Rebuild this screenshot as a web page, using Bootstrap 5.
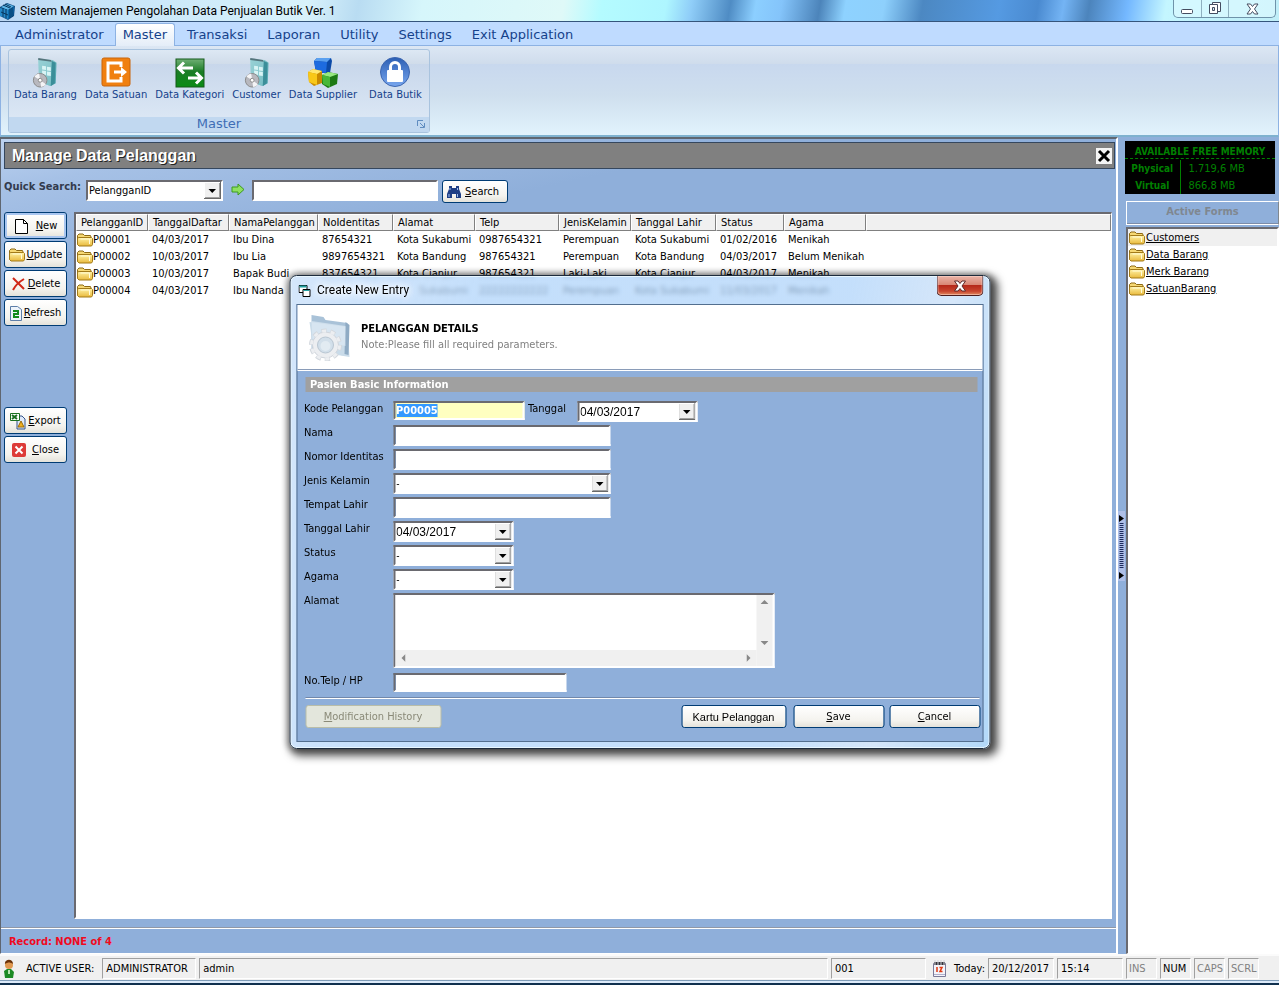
<!DOCTYPE html>
<html lang="id">
<head>
<meta charset="utf-8">
<meta name="viewport" content="width=device-width, initial-scale=1">
<title>Sistem Manajemen Pengolahan Data Penjualan Butik Ver. 1</title>
<link href="https://cdn.jsdelivr.net/npm/bootstrap@5.3.0/dist/css/bootstrap.min.css" rel="stylesheet">
<style>
:root{--pane:#8fafda;--face:#f0f0f0;--ink:#15428b;--ui:"DejaVu Sans Condensed","DejaVu Sans",sans-serif;--wide:"DejaVu Sans",sans-serif;--caption:Roboto,"Noto Sans",sans-serif;--plain:"Liberation Sans",Arial,sans-serif}
body{font:11px/14px var(--ui);color:#000;background:var(--pane)}
svg{display:block;flex:none}
u{text-decoration:underline}
/* window caption */
.win-title{height:22px;border-bottom:1px solid #35557c;font:12px/22px var(--caption);
background:linear-gradient(100deg,#b9d5f3 0,#c4e2f8 5%,#d8f2fb 24%,#b9dcf2 28%,#d6f6fb 33%,#dff9f8 44%,#b4fbff 47%,#aef6ff 52%,#8fcdf8 54%,#4f8cc4 57%,#8ccfff 59%,#84c4fa 61%,#4c84ba 64%,#8ed2ff 66%,#8ed0fc 69%,#4c88c2 72%,#559ae2 78%,#4a8ad0 81%,#74b4f4 83%,#4c84bc 85%,#74b8ff 88%,#c4f6ff 91%,#c0eef8 100%)}
.win-ctl{height:18px;border:1px solid #6f93aa;border-top:0;border-radius:0 0 5px 5px;margin-right:3px;background:rgba(220,250,255,.7)}
.win-ctl button{border:0;background:none;padding:0;width:27px;display:flex;align-items:center;justify-content:center}
.win-ctl button+button{border-left:1px solid #8fb0c0}
.win-ctl button:last-child{width:47px}
/* ribbon */
.rib-tabs{height:23px;background:#bfdbff;padding-left:5px;font:13px/25px var(--wide);position:relative}
.rib-tabs a{color:var(--ink);text-decoration:none;padding:0 10px;height:24px}
.rib-tabs a.on{margin:1px 2px 0 1px;padding:0 7px;background:linear-gradient(#fff,#e4edf8);border:1px solid #8db2e3;border-bottom:0;border-radius:3px 3px 0 0;line-height:22px;height:23px;z-index:1}
.rib-body{height:92px;border:1px solid #8db2e3;border-bottom:2px solid #7fb2cf;background:linear-gradient(#dce7f4 0,#cfdcec 18px,#c8d8ee 18px,#cfdfee 50px,#e2f3fd 90px);padding:3px 7px}
.rib-group{height:84px;border:1px solid #a9c3de;border-radius:3px;background:linear-gradient(#dde8f4 0,#d0dcea 14px,#c8d7eb 14px,#dae6f4 66px);color:var(--ink);font:10px/12px var(--wide)}
.rib-items{gap:8px;padding:7px 7px 0 5px}
.rib-item{border:0;background:none;padding:0;color:inherit;display:flex;flex-direction:column;align-items:center;gap:1px}
.rib-cap{height:15px;background:#c1d8f0;color:#3e6db5;font-size:13px;line-height:14px;position:relative}
/* panes */
.pane-main{background:linear-gradient(168deg,#bcd2f0 0,#a6c1e6 50px,var(--pane) 160px);border:1px solid #5f6670;border-top:2px solid #5f6670;border-right:2px solid #fff;border-bottom:1px solid #fff;min-width:0}
.form-head{height:27px;margin:3px 1px 0 3px;background:#808080;border:1px solid #35475e;color:#fff;font:bold 16px/25px var(--plain);text-shadow:1px 1px 0 #222;padding:0 2px 0 7px}
.x-box{width:16px;height:16px;background:#f4f4f4;border:0;padding:0}
.bev{border:2px solid;border-color:#6a6a70 #fff #fff #6a6a70;background-color:#fff}
.fld.form-control,.fld.form-select{font:11px/15px var(--ui);color:#000;border:2px solid;border-color:#6a6a70 #fff #fff #6a6a70;border-radius:0;padding:0 1px;height:21px;min-height:0;background-color:#fff;box-shadow:none;flex:none}
.fld.form-select{appearance:none;padding-right:18px;background-repeat:no-repeat;background-position:right 0 center;background-size:17px 17px;background-image:url("data:image/svg+xml,%3Csvg xmlns='http://www.w3.org/2000/svg' viewBox='0 0 17 17'%3E%3Cpath fill='%23696969' d='M0 0h17v17H0z'/%3E%3Cpath fill='%23fff' d='M0 0h16v16H0z'/%3E%3Cpath fill='%23a0a0a0' d='M1 1h15v15H1z'/%3E%3Cpath fill='%23f0f0f0' d='M1 1h14v14H1z'/%3E%3Cpath d='M4.500 7h7.500L8.250 11z'/%3E%3C/svg%3E")}
.fld.form-select.plain-txt{font:12px/16px var(--plain)}
.fld.form-control.key{background:#ffffc0;font-weight:bold;height:19px}
.key::selection{background:#3399ff;color:#fff}
.w-date{width:120px}.w-key{width:131px}.w-long{width:217px}.w-tel{width:173px}.w-pick{width:137px}.w-find{width:186px}
.push{font:11px/14px var(--ui);color:#000;border:1px solid #003c74;border-radius:3px;background:linear-gradient(#fff,#f4f3ee 70%,#e4e2da);padding:1px 0 0;height:23px;display:flex;align-items:center;justify-content:center;flex:none}
.push:disabled{color:#8a8a78;border-color:#b9bda8;background:#e3e6dc;opacity:1}
.find-row{padding:7px 0 0 3px;margin-top:4px}
.find-row .arrow{margin:3px 7px 0 8px}
.q-lab{width:78px;color:#333b4d}
.work{padding:0 4px 0 3px;margin-top:9px}
.side-bar{width:63px;gap:2px;margin-right:7px}
.side-bar .push{height:27px;gap:2px}
.side-bar .push:first-child{box-shadow:inset 0 0 0 2px #a9c6f0}
.side-bar .push.after{margin-top:79px}
/* record grid */
.grid-box{min-width:0;overflow:hidden;border-right-width:1px}
.rec-grid{width:100%;table-layout:fixed;border-collapse:separate;border-spacing:0;white-space:nowrap}
.rec-grid th{font-weight:normal;background:var(--face);height:17px;padding:0 0 0 4px;border:1px solid;border-color:#fff #808080 #808080 #fff}
.rec-grid td{height:17px;padding:1px 0 0 4px}
.rec-grid td:first-child{padding-left:1px}
.rec-grid td.half-seen{padding-left:26px}
.rec-line{border-top:1px solid #8f98a8;height:26px;color:#f00a1e;font-weight:bold;padding:7px 8px 0;box-shadow:inset 0 1px 0 #fff}
/* splitter and right column */
.splitter{width:8px;background:var(--pane);display:flex;align-items:center}
.right-col{width:154px;padding:4px 0 0}
.memo{background:#000;color:#008000;width:150px;height:53px;padding:4px 0 0}
.memo h2{font:bold 10px/13px var(--ui);margin:0 0 1px;text-align:center;border-bottom:1px dashed #008000}
.memo th{font:bold 10px/16px var(--ui);width:55px;text-align:center;border-right:1px solid #008000;padding:0}
.memo td{padding:0 0 0 8px;line-height:17px}
.act-head{height:24px;margin:7px 0 2px 1px;border:1px solid;border-color:#fff #808890 #fff #fff;box-shadow:inset 0 -1px 0 #7c8ca8;color:#7f8790;font-weight:bold;line-height:19px;text-align:center}
.form-list{margin-left:1px;border-bottom-width:1px}
.form-list a{display:flex;gap:1px;height:17px;align-items:center;color:#000;padding-left:1px}
.form-list a:first-child{background:#f0f0f0}
/* dialog */
.dlg{width:701px;top:275px;border:1px solid #1d2b3c;border-radius:7px;padding:0 6px 6px;background:linear-gradient(100deg,rgba(205,226,250,.85) 0,rgba(176,212,250,.75) 25%,rgba(176,212,250,.75) 72%,rgba(206,226,248,.85) 85%,rgba(170,212,248,.9) 100%);backdrop-filter:blur(2px);box-shadow:inset 0 0 0 1px rgba(235,248,255,.9),4px 4px 9px 3px rgba(0,0,0,.65),0 0 6px 2px rgba(0,0,0,.3);z-index:10}
.dlg-title{height:28px;font:12px/28px var(--caption);padding-left:2px;gap:6px}
.dlg-title h2{font:inherit;margin:0;text-shadow:0 0 6px #fff,0 0 6px #fff,0 0 8px #fff}
.dlg-x{width:47px;height:20px;border:1px solid #4b1c1c;border-top:0;border-radius:0 0 5px 5px;padding:0;background:linear-gradient(#eab4a8 0,#d98876 45%,#b5291a 50%,#c8452e 80%,#e08a60);display:flex;align-items:center;justify-content:center;box-shadow:inset 0 0 0 1px rgba(255,220,210,.5)}
.dlg-client{border:1px solid #536f8f;background:var(--pane)}
.dlg-head{height:65px;background:#fff;border-bottom:1px solid #8a9cb8;padding:8px 10px 0;gap:10px}
.dlg-head h3{font:bold 11px/14px var(--ui);margin:9px 0 2px}
.dlg-head p{margin:0;color:#808080}
.dlg-body{border-top:1px solid #fff;padding:6px 2px 13px 7px}
.bar-title{background:#a0a0a0;color:#fff;font:bold 11px/15px var(--ui);margin:0 3px 9px 1px;padding-left:5px}
.entry{display:grid;grid-template-columns:89px 1fr;row-gap:3px}
.entry label{align-self:start;padding-top:1px;white-space:nowrap}
.entry .date-lab{min-width:45px;margin:0 4px}
.fld.form-control.w-tel{height:19px}
.memo-wrap{width:381px;height:75px;margin-bottom:2px;display:grid;grid-template:1fr 16px/1fr 16px}
.memo-wrap textarea{border:0;resize:none;padding:2px;width:100%;height:100%;overflow:hidden;font:inherit;outline:0}
.track{background:#f0f0f0;display:flex;justify-content:space-between;align-items:center;padding:4px 5px}
.rule{border-top:1px solid #7188ab;border-bottom:1px solid #fff;margin:5px 1px 6px}
.dlg-foot{padding-left:1px}
.foot-hist{width:136px}
.foot-card{width:105px;font:11px/14px var(--plain);margin-right:7px}
.foot-act{width:91px}
.foot-act+.foot-act{margin-left:5px}
/* status bar */
.stat{height:26px;background:var(--face);border-top:2px solid #fbfbfb;padding:2px 20px 0 4px;gap:3px}
.stat>div{height:21px;display:flex;align-items:center;white-space:nowrap}
.cell{border:1px solid;border-color:#a0a0a0 #fff #fff #a0a0a0;padding:1px 0 0 3px}
.who{gap:12px;padding-right:5px}
.w-role{width:94px}.w-code{width:95px}.w-day{width:66px}.w-key2{width:31px}.w-key2.cell{padding-left:2px}
.off{color:#808080}
.base{height:5px;background:linear-gradient(#7f9db9 0 1px,#dceafa 1px 3px,#10304e 3px)}
</style>
</head>
<body>
<svg width="0" height="0" class="position-absolute" aria-hidden="true">
<defs>
<linearGradient id="gF" x1="0" y1="0" x2="0" y2="1"><stop offset="0" stop-color="#fff3a6"/><stop offset="1" stop-color="#e9b93c"/></linearGradient>
<linearGradient id="gT" x1="0" y1="0" x2="1" y2="1"><stop offset="0" stop-color="#b8e2e4"/><stop offset="1" stop-color="#3d9aa4"/></linearGradient>
<linearGradient id="gG" x1="0" y1="0" x2="0" y2="1"><stop offset="0" stop-color="#6faf74"/><stop offset=".45" stop-color="#1b7d26"/><stop offset="1" stop-color="#0a8c14"/></linearGradient>
<linearGradient id="gB" x1="0" y1="0" x2="0" y2="1"><stop offset="0" stop-color="#2c5fb4"/><stop offset="1" stop-color="#78a6ee"/></linearGradient>
<symbol id="folder" viewBox="0 0 16 14"><path d="M.5 11.500V2.500L2 1h4l1.500 1.500h6L14 4v1" fill="#f6d873" stroke="#8d6a14"/><path d="M2 4.500h12.500l1 1v6l-1 1.500H2L.500 11.500V5z" fill="url(#gF)" stroke="#a37b19"/><path d="M3.500 6h9v5" fill="none" stroke="#fffbd8"/></symbol>
<symbol id="box" viewBox="0 0 26 32"><path d="M6 2l15 1 4 3-1 21-5 3L7 26z" fill="url(#gT)"/><path d="M6 2l14 3-1 25L7 26z" fill="#8ccbd0" opacity=".7"/><path d="M20 4l4 2-1 21-4 3z" fill="#3b8e99"/><path d="M6 1l13 2 1 2L6 3z" fill="#54747c"/><path d="M10 9l4 .5v4L10 13zM15 10l4 .5v4L15 14zM10 14l4 .5v4L10 18zM15 15l4 .5v4L15 19z" fill="#d8f4f5"/><circle cx="8" cy="24" r="7" fill="#b8b8be" stroke="#888"/><path d="M8 24L2 20a7 7 0 0 1 5-3zM8 24l6 4a7 7 0 0 1-5 3z" fill="#f4f4f6"/><circle cx="8" cy="24" r="2" fill="#fff" stroke="#888"/></symbol>
</defs></svg>

<div class="d-flex flex-column min-vh-100 position-relative">
<header>
 <div class="win-title d-flex align-items-start">
  <svg width="16" height="20" viewBox="0 0 16 20"><path d="M0 7l7-4 8 3-1 10-6 4-8-4z" fill="#0d4a80"/><path d="M1 7l6-3 7 2-6 4z" fill="#5cb4e6"/><path d="M0 8l8 2v9l-8-3z" fill="#2688c8"/><path d="M8 10l6-3-1 9-5 3z" fill="#0c6cb0"/><path d="M3 5l7 3M5 4l6 3M1 12l7 3M10 9v9M12 8v9M3 8v9M6 9v9" stroke="#08345c" fill="none"/></svg>
  <span class="ms-1">Sistem Manajemen Pengolahan Data Penjualan Butik Ver. 1</span>
  <div class="win-ctl d-flex ms-auto">
   <button aria-label="Minimize"><svg width="13" height="14"><rect x=".5" y="7.500" width="11" height="4" rx="1" fill="#fff" stroke="#444c60"/></svg></button>
   <button aria-label="Restore"><svg width="13" height="13"><path d="M3.500.500h8v9h-8z" fill="#fff" stroke="#444c60"/><path d="M.500 2.500h8v9h-8z" fill="#fff" stroke="#444c60"/><path d="M3.500 5.500h2v3h-2z" fill="#d0e8f4" stroke="#444c60"/></svg></button>
   <button aria-label="Close window"><svg width="13" height="12"><path d="M1 1h3.500l2 2.500L8.500 1H12L8.500 6l3.500 5H8.500l-2-2.500-2 2.500H1l3.500-5z" fill="#fff" stroke="#444c60"/></svg></button>
  </div>
 </div>
 <nav class="rib-tabs d-flex">
  <a href="#">Administrator</a><a href="#" class="on">Master</a><a href="#">Transaksi</a><a href="#">Laporan</a><a href="#">Utility</a><a href="#">Settings</a><a href="#">Exit Application</a>
 </nav>
 <div class="rib-body d-flex">
  <div class="rib-group d-flex flex-column justify-content-between">
   <div class="rib-items d-flex">
    <button class="rib-item"><svg width="26" height="31"><use href="#box"/></svg>Data Barang</button>
    <button class="rib-item"><svg width="30" height="31" viewBox="0 0 30 31"><rect x="1" y="1" width="28" height="28" rx="2" fill="#f08010" stroke="#c9640a"/><path d="M20 10V6H7v18h13v-4" fill="none" stroke="#fff" stroke-width="3"/><path d="M13 13.500h7V10l6 5-6 5v-3.500h-7z" fill="#fff"/></svg>Data Satuan</button>
    <button class="rib-item"><svg width="30" height="31" viewBox="0 0 30 31"><rect x="1" y="2" width="28" height="28" fill="url(#gG)" stroke="#155a1a"/><path d="M18 11H4M9 5.500L3.500 11 9 16.500M13 21h13M21 15.500l5.500 5.500-5.500 5.500" fill="none" stroke="#fff" stroke-width="3"/></svg>Data Kategori</button>
    <button class="rib-item"><svg width="26" height="31"><use href="#box"/></svg>Customer</button>
    <button class="rib-item"><svg width="30" height="31" viewBox="0 0 30 31"><path d="M6 4l3-3h14l1 3-2 12H8z" fill="#0c4aa8"/><path d="M6 4l3-3h14l-4 4z" fill="#5aa0f0"/><path d="M6 4l13 1-1 11-10-1z" fill="#1d6be0"/><path d="M0 15l5-3 9 2v12l-8 3-5-4z" fill="#c98a00"/><path d="M0 15l5-3 9 2-5 3z" fill="#ffe870"/><path d="M0 15l9 2v11l-8-3z" fill="#f8c818"/><path d="M14 18l6-3 10 2-1 10-9 4-6-4z" fill="#1d7a14"/><path d="M14 18l6-3 10 2-8 3z" fill="#98e880"/><path d="M14 18l8 2v10l-7-3z" fill="#48b838"/></svg>Data Supplier</button>
    <button class="rib-item ms-1"><svg width="30" height="31" viewBox="0 0 30 31"><circle cx="15" cy="15" r="14.500" fill="url(#gB)" stroke="#3d66b0"/><rect x="7" y="13" width="16" height="12" rx="1" fill="#fff"/><path d="M10.500 14v-4a4.500 4.500 0 0 1 9 0v4" fill="none" stroke="#fff" stroke-width="3"/></svg>Data Butik</button>
   </div>
   <div class="rib-cap text-center">Master<svg class="position-absolute end-0 bottom-0 me-1 mb-1" width="8" height="8"><path d="M.500 6V.500H6M3 3l4 4M7.500 3v4.500H3" fill="none" stroke="#5f8cc0"/></svg></div>
  </div>
 </div>
</header>

<main class="d-flex flex-fill">
 <section class="pane-main d-flex flex-column flex-fill">
  <div class="form-head d-flex align-items-center"><span>Manage Data Pelanggan</span>
   <button class="x-box ms-auto" aria-label="Close form"><svg width="16" height="16"><path d="M3 3l10 10M13 3L3 13" stroke="#000" stroke-width="3"/></svg></button></div>
  <form class="find-row d-flex align-items-start">
   <label for="qs" class="q-lab fw-bold me-1 text-nowrap">Quick Search:</label>
   <select id="qs" class="fld form-select w-pick"><option>PelangganID</option></select>
   <svg class="arrow" width="14" height="13" viewBox="0 0 14 13"><path d="M1 4h6V1l6 5.500L7 12V9H1z" fill="#8ee060" stroke="#3c9a1c"/></svg>
   <input id="find" aria-label="Search text" class="fld form-control w-find">
   <button type="button" class="push ms-1 px-1 gap-1"><svg width="14" height="14" viewBox="0 0 14 14"><path d="M2 1h3v2h4V1h3v3l2 5v4H9V9H5v4H0V9l2-5z" fill="#1f3f86"/><path d="M2 9v3M10.500 9v3M3 3v2M10.500 3v2" stroke="#9fc0f0"/></svg><span class="pe-1"><u>S</u>earch</span></button>
  </form>
  <div class="work d-flex flex-fill">
   <div class="side-bar d-flex flex-column flex-shrink-0">
    <button class="push"><svg class="me-1" width="16" height="17"><path d="M1.500 1.500h8l4 4v10h-12z" fill="#fff" stroke="#000"/><path d="M9.500 1.500v4h4" fill="none" stroke="#000"/></svg><span><u>N</u>ew</span></button>
    <button class="push"><svg width="16" height="14"><use href="#folder"/></svg><span><u>U</u>pdate</span></button>
    <button class="push"><svg width="15" height="14"><path d="M2 1c3 3 7 7 11 11M13 2C8 5 4 9 2 13" stroke="#d02818" stroke-width="2" fill="none"/></svg><span><u>D</u>elete</span></button>
    <button class="push"><svg width="12" height="15"><path d="M.500.500h7l4 3v11h-11z" fill="#eef4fb" stroke="#5d7ea8"/><path d="M3 5h5v3H4v3h5" fill="none" stroke="#128a1c" stroke-width="2"/></svg><span><u>R</u>efresh</span></button>
    <button class="push after"><svg width="16" height="17"><path d="M7 3h5l3 3v10H7z" fill="#dfe9f8" stroke="#34548c"/><path d="M.500.500h9v7h-9z" fill="#fff" stroke="#1a7020"/><path d="M2 2l5 4M7 2L2 6" stroke="#1a7020" stroke-width="2"/><path d="M11 8l3 6H8z" fill="#f0b020" stroke="#9a6a08"/></svg><span><u>E</u>xport</span></button>
    <button class="push"><svg class="me-1" width="14" height="14"><rect width="14" height="14" rx="2" fill="#dd3b38"/><path d="M3.500 3.500l7 7M10.500 3.500l-7 7" stroke="#fff" stroke-width="2"/></svg><span><u>C</u>lose</span></button>
   </div>
   <div class="grid-box bev flex-fill">
    <table class="rec-grid">
     <colgroup><col width="72"><col width="81"><col width="89"><col width="75"><col width="82"><col width="84"><col width="72"><col width="85"><col width="68"><col width="82"><col></colgroup>
     <thead><tr><th>PelangganID</th><th>TanggalDaftar</th><th>NamaPelanggan</th><th>NoIdentitas</th><th>Alamat</th><th>Telp</th><th>JenisKelamin</th><th>Tanggal Lahir</th><th>Status</th><th>Agama</th><th></th></tr></thead>
     <tbody>
      <tr><td><span class="d-flex align-items-center"><svg width="16" height="14"><use href="#folder"/></svg>P00001</span></td><td>04/03/2017</td><td>Ibu Dina</td><td>87654321</td><td>Kota Sukabumi</td><td>0987654321</td><td>Perempuan</td><td>Kota Sukabumi</td><td>01/02/2016</td><td>Menikah</td><td></td></tr>
      <tr><td><span class="d-flex align-items-center"><svg width="16" height="14"><use href="#folder"/></svg>P00002</span></td><td>10/03/2017</td><td>Ibu Lia</td><td>9897654321</td><td>Kota Bandung</td><td>987654321</td><td>Perempuan</td><td>Kota Bandung</td><td>04/03/2017</td><td>Belum Menikah</td><td></td></tr>
      <tr><td><span class="d-flex align-items-center"><svg width="16" height="14"><use href="#folder"/></svg>P00003</span></td><td>10/03/2017</td><td>Bapak Budi</td><td>837654321</td><td>Kota Cianjur</td><td>987654321</td><td>Laki-Laki</td><td>Kota Cianjur</td><td>04/03/2017</td><td>Menikah</td><td></td></tr>
      <tr><td><span class="d-flex align-items-center"><svg width="16" height="14"><use href="#folder"/></svg>P00004</span></td><td>04/03/2017</td><td>Ibu Nanda</td><td></td><td class="half-seen">Sukabumi</td><td>22222222222</td><td>Perempuan</td><td>Kota Sukabumi</td><td>11/03/2017</td><td>Menikah</td><td></td></tr>
     </tbody>
    </table>
   </div>
  </div>
  <div class="rec-line mt-2">Record: NONE of 4</div>
 </section>
 <div class="splitter"><svg width="7" height="70" viewBox="0 0 7 70"><rect width="7" height="70" fill="#aebfe8"/><path d="M3.500 12v46" stroke="#1c2a5c" stroke-width="4" stroke-dasharray="1 1"/><path d="M1 4l5 3.500L1 11zM1 61l5 3.500L1 68z" fill="#000"/></svg></div>
 <aside class="right-col d-flex flex-column flex-shrink-0">
  <div class="memo"><h2>AVAILABLE FREE MEMORY</h2>
   <table><tr><th>Physical</th><td>1.719,6 MB</td></tr><tr><th>Virtual</th><td>866,8 MB</td></tr></table></div>
  <div class="act-head">Active Forms</div>
  <nav class="form-list bev flex-fill">
   <a href="#"><svg width="16" height="14"><use href="#folder"/></svg>Customers</a>
   <a href="#"><svg width="16" height="14"><use href="#folder"/></svg>Data Barang</a>
   <a href="#"><svg width="16" height="14"><use href="#folder"/></svg>Merk Barang</a>
   <a href="#"><svg width="16" height="14"><use href="#folder"/></svg>SatuanBarang</a>
  </nav>
 </aside>
</main>

<footer>
 <div class="stat d-flex">
  <div class="who"><svg width="10" height="20" viewBox="0 0 10 20"><path d="M0 12l3-2h4l3 3-1 6H1z" fill="#1c8a24"/><circle cx="5" cy="6" r="4" fill="#e09850"/><path d="M1 5C0 0 9-1 9 5 6 3 4 3 1 5z" fill="#6b3208"/><path d="M4 11h2v4H4z" fill="#b8e4b0"/></svg><span>ACTIVE USER:</span></div>
  <div class="cell w-role">ADMINISTRATOR</div>
  <div class="cell flex-fill">admin</div>
  <div class="cell w-code">001</div>
  <div class="ps-1"><svg width="13" height="17"><path d="M.500 3.500h12v13H.500z" fill="#f4f4fa" stroke="#7a7a98"/><path d="M1 2h11v3H1z" fill="#34343c"/><path d="M2 0v5M5 0v5M8 0v5M11 0v5" stroke="#d0d0d8"/><path d="M4 7v5M6.500 7.500H9L7 11.500h2.500" stroke="#e03810" stroke-width="1.500" fill="none"/><path d="M1 14.500h11" stroke="#b0b0cc"/></svg><span class="ps-2">Today:</span></div>
  <div class="cell w-day">20/12/2017</div>
  <div class="cell w-day">15:14</div>
  <div class="cell w-key2 off">INS</div>
  <div class="cell w-key2">NUM</div>
  <div class="cell w-key2 off">CAPS</div>
  <div class="cell w-key2 off">SCRL</div>
 </div>
 <div class="base"></div>
</footer>

<div class="dlg position-absolute start-50 translate-middle-x" role="dialog" aria-labelledby="dlgTitle">
 <div class="dlg-title d-flex align-items-start">
  <svg class="mt-2" width="13" height="14"><path d="M.500 1.500h8v7h-8z" fill="#fff" stroke="#000"/><path d="M1 2.500h7" stroke="#20a0a0" stroke-width="2"/><path d="M4.500 5.500h7v7h-7z" fill="#fff" stroke="#000"/><path d="M5 6.500h6" stroke="#20a0a0"/></svg>
  <h2 id="dlgTitle">Create New Entry</h2>
  <button class="dlg-x ms-auto" aria-label="Close dialog"><svg width="13" height="12"><path d="M1 1h3.500l2 2.500L8.500 1H12L8.500 6l3.500 5H8.500l-2-2.500-2 2.500H1l3.500-5z" fill="#fff" stroke="#5c2a2a"/></svg></button>
 </div>
 <div class="dlg-client">
  <div class="dlg-head d-flex">
   <svg width="44" height="48" viewBox="0 0 44 48"><path d="M4 2l12 2 2 3 22 3-1 33-35-6z" fill="#a9c2d8"/><path d="M2 9l38 5 2 30-36-6z" fill="#c9dbe9"/><path d="M38 9l4 3-1 30-4-1z" fill="#8fabc4"/><path d="M4 8l34 5v20L5 26z" fill="#dde9f3" opacity=".7"/><circle cx="18" cy="32" r="14" fill="none" stroke="#d3d8de" stroke-width="5" stroke-dasharray="5 3.796"/><circle cx="18" cy="32" r="13" fill="#eceef1" stroke="#d0d5dc"/><circle cx="18" cy="32" r="14" fill="none" stroke="#eceef1" stroke-width="3" stroke-dasharray="4 4.796" stroke-dashoffset="-.5"/><circle cx="18" cy="32" r="8" fill="#d2dfea" stroke="#b9c6d2"/><circle cx="18" cy="33" r="5" fill="#e2ebf2"/></svg>
   <div><h3>PELANGGAN DETAILS</h3><p>Note:Please fill all required parameters.</p></div>
  </div>
  <form class="dlg-body">
   <h3 class="bar-title">Pasien Basic Information</h3>
   <div class="entry">
    <label for="kode">Kode Pelanggan</label>
    <div class="d-flex"><input id="kode" class="fld form-control key w-key" value="P00005"><label for="tgl" class="date-lab">Tanggal</label><select id="tgl" class="fld form-select plain-txt w-date"><option>04/03/2017</option></select></div>
    <label for="nama">Nama</label><input id="nama" class="fld form-control w-long">
    <label for="noid">Nomor Identitas</label><input id="noid" class="fld form-control w-long">
    <label for="jk">Jenis Kelamin</label><select id="jk" class="fld form-select w-long"><option>-</option></select>
    <label for="tmp">Tempat Lahir</label><input id="tmp" class="fld form-control w-long">
    <label for="lahir">Tanggal Lahir</label><select id="lahir" class="fld form-select plain-txt w-date"><option>04/03/2017</option></select>
    <label for="st">Status</label><select id="st" class="fld form-select w-date"><option>-</option></select>
    <label for="ag">Agama</label><select id="ag" class="fld form-select w-date"><option>-</option></select>
    <label for="al">Alamat</label>
    <div class="memo-wrap bev"><textarea id="al"></textarea>
     <div class="track flex-column"><svg width="8" height="5"><path d="M0 5l4-4 4 4z" fill="#888"/></svg><svg width="8" height="5"><path d="M0 0l4 4 4-4z" fill="#888"/></svg></div>
     <div class="track"><svg width="5" height="8"><path d="M5 0L1 4l4 4z" fill="#888"/></svg><svg width="5" height="8"><path d="M0 0l4 4-4 4z" fill="#888"/></svg></div><div class="track"></div></div>
    <label for="tel">No.Telp / HP</label><input id="tel" class="fld form-control w-tel">
   </div>
   <div class="rule"></div>
   <div class="d-flex dlg-foot">
    <button type="button" class="push foot-hist" disabled><span><u>M</u>odification History</span></button>
    <button type="button" class="push foot-card ms-auto">Kartu Pelanggan</button>
    <button type="button" class="push foot-act"><span><u>S</u>ave</span></button>
    <button type="button" class="push foot-act"><span><u>C</u>ancel</span></button>
   </div>
  </form>
 </div>
</div>
</div>
<script src="https://cdn.jsdelivr.net/npm/bootstrap@5.3.0/dist/js/bootstrap.bundle.min.js"></script>
<script>document.getElementById('kode').select();</script>
</body>
</html>
